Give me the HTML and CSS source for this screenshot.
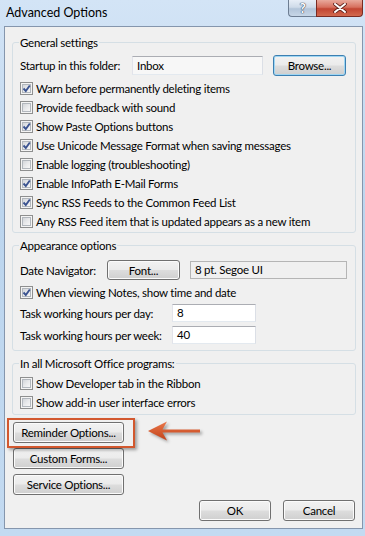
FILE: index.html
```html
<!DOCTYPE html>
<html lang="en">
<head>
  <meta charset="UTF-8" />
  <title>Advanced Options</title>
  <link rel="stylesheet" href="styles.css">
</head>
<body>
  <div class="window">
    <div class="titlebar">
      <span class="title">Advanced Options</span>
      <div class="caption-buttons">
        <span class="cap help">?</span>
        <span class="cap close">
          <svg width="14" height="10" viewBox="0 0 14 10"><path d="M2 1 L12 9 M12 1 L2 9" stroke="#5b1f18" stroke-width="3.6" stroke-linecap="round"/><path d="M2 1 L12 9 M12 1 L2 9" stroke="#fff" stroke-width="2" stroke-linecap="round"/></svg>
        </span>
      </div>
    </div>

    <div class="client">
      <fieldset class="group general">
        <legend>General settings</legend>
        <div class="row folder">
          <span class="label folder-label">Startup in this folder:</span>
          <span class="field inbox">Inbox</span>
          <button class="btn default browse">Browse...</button>
        </div>
        <div class="check first"><span class="box"><svg viewBox="0 0 9 9"><path d="M1.5 4.5 L3.8 7 L7.8 1.5" /></svg></span>Warn before permanently deleting items</div>
        <div class="check"><span class="box"></span>Provide feedback with sound</div>
        <div class="check"><span class="box"><svg viewBox="0 0 9 9"><path d="M1.5 4.5 L3.8 7 L7.8 1.5" /></svg></span>Show Paste Options buttons</div>
        <div class="check"><span class="box"><svg viewBox="0 0 9 9"><path d="M1.5 4.5 L3.8 7 L7.8 1.5" /></svg></span>Use Unicode Message Format when saving messages</div>
        <div class="check"><span class="box"></span>Enable logging (troubleshooting)</div>
        <div class="check"><span class="box"><svg viewBox="0 0 9 9"><path d="M1.5 4.5 L3.8 7 L7.8 1.5" /></svg></span>Enable InfoPath E-Mail Forms</div>
        <div class="check"><span class="box"><svg viewBox="0 0 9 9"><path d="M1.5 4.5 L3.8 7 L7.8 1.5" /></svg></span>Sync RSS Feeds to the Common Feed List</div>
        <div class="check"><span class="box"></span>Any RSS Feed item that is updated appears as a new item</div>
      </fieldset>

      <fieldset class="group appearance">
        <legend>Appearance options</legend>
        <div class="row navigator">
          <span class="label nav-label">Date Navigator:</span>
          <button class="btn font-btn">Font...</button>
          <span class="field readonly">8 pt. Segoe UI</span>
        </div>
        <div class="check notes"><span class="box"><svg viewBox="0 0 9 9"><path d="M1.5 4.5 L3.8 7 L7.8 1.5" /></svg></span>When viewing Notes, show time and date</div>
        <div class="row hours day">
          <span class="label hours-label">Task working hours per day:</span>
          <span class="field hours-field">8</span>
        </div>
        <div class="row hours week">
          <span class="label hours-label">Task working hours per week:</span>
          <span class="field hours-field">40</span>
        </div>
      </fieldset>

      <fieldset class="group office">
        <legend>In all Microsoft Office programs:</legend>
        <div class="check"><span class="box"></span>Show Developer tab in the Ribbon</div>
        <div class="check"><span class="box"></span>Show add-in user interface errors</div>
      </fieldset>

      <div class="side-buttons">
        <div class="marked">
          <button class="btn wide">Reminder Options...</button>
          <span class="highlight"></span>
          <svg class="arrow" width="58" height="26" viewBox="0 0 58 26">
            <defs>
              <linearGradient id="arrowFill" x1="0" y1="0" x2="0" y2="1">
                <stop offset="0" stop-color="#e9774a"/>
                <stop offset="1" stop-color="#c24219"/>
              </linearGradient>
            </defs>
            <path d="M2 12 L21 2.5 L16.5 10.5 L54 10.5 L54 13.5 L16.5 13.5 L21 21.5 Z" fill="url(#arrowFill)"/>
          </svg>
        </div>
        <button class="btn wide">Custom Forms...</button>
        <button class="btn wide">Service Options...</button>
      </div>

      <div class="dialog-buttons">
        <button class="btn action">OK</button>
        <button class="btn action">Cancel</button>
      </div>
    </div>
  </div>
</body>
</html>
```

FILE: styles.css
```css
body {
  margin: 0;
  font-family: 'Lato', 'Liberation Sans', sans-serif;
  font-size: 11.5px;
  letter-spacing: -0.25px;
  color: #000;
  background-color: #ffffff;
  white-space: nowrap;
}

.window {
  width: 365px;
  height: 536px;
  box-sizing: border-box;
  padding: 0 2px 0 4px;
  background: linear-gradient(180deg, #d3e4f6 0%, #bcd5ee 40%, #c3daf1 100%);
}

.titlebar {
  height: 26px;
  display: flex;
  justify-content: space-between;
  align-items: flex-start;
}

.title {
  margin: 5px 0 0 2px;
  line-height: 15px;
  font-size: 12.5px;
  letter-spacing: 0;
  color: #000;
}

.caption-buttons {
  display: flex;
}

.cap {
  height: 17px;
  box-sizing: border-box;
  display: flex;
  align-items: center;
  justify-content: center;
  border: 1px solid #6d7d92;
  border-top: none;
}

.help {
  width: 28px;
  border-radius: 0 0 0 4px;
  border-right: none;
  background: linear-gradient(180deg, #e7eef7 0%, #cfdbe9 45%, #b2c4d9 55%, #c7d6e7 100%);
  color: #fff;
  font-weight: bold;
  font-size: 13px;
  text-shadow: 0 0 1px #3d4c60, 0 0 1px #3d4c60, 0 0 1px #3d4c60;
}

.close {
  width: 47px;
  border-radius: 0 0 4px 0;
  border-color: #7a2b22;
  background: linear-gradient(180deg, #e9a99c 0%, #d7705e 45%, #c24532 55%, #d26a4f 100%);
}

.client {
  height: 503px;
  box-sizing: border-box;
  background-color: #f0f0f0;
  border: 1px solid #8596ad;
  padding: 8px 6px 0 7px;
}

.group {
  margin: 0;
  border: 1px solid #d5dfe5;
  border-radius: 3px;
  padding: 0 6px 0 7px;
}

.group legend {
  padding: 0 1px;
  margin-left: -1px;
  line-height: 15px;
}

.group + .group {
  margin-top: 5px;
}

.general {
  padding-top: 5px;
  padding-bottom: 1px;
}

.appearance {
  padding-top: 7px;
  padding-bottom: 5px;
}

.office {
  padding-top: 3px;
  padding-bottom: 2px;
}

.row {
  display: flex;
  align-items: center;
}

.label {
  flex-shrink: 0;
}

.folder {
  height: 21px;
}

.folder-label {
  width: 112px;
}

.field {
  box-sizing: border-box;
  height: 19px;
  line-height: 17px;
  padding: 0 4px;
  border: 1px solid #abadb3;
  border-color: #abadb3 #dbdfe6 #e3e9ef #e2e3ea;
  background-color: #ffffff;
}

.inbox {
  width: 131px;
  background-color: #f7f7f7;
  margin-right: 10px;
}

.check {
  display: flex;
  align-items: center;
  height: 19px;
}

.check.first {
  margin-top: 3px;
}

.box {
  position: relative;
  width: 13px;
  height: 13px;
  box-sizing: border-box;
  margin-right: 3px;
  border: 1px solid #8e8f8f;
  padding: 1px;
  background-color: #f4f4f4;
  display: flex;
  flex-shrink: 0;
}

.box::before {
  content: '';
  flex: 1;
  border: 1px solid #b2b7bd;
  background: linear-gradient(135deg, #d3d6da 0%, #e8e9eb 50%, #f7f7f7 100%);
}

.box svg {
  position: absolute;
  left: 1px;
  top: 1px;
  width: 9px;
  height: 9px;
}

.box svg path {
  fill: none;
  stroke: #3b5390;
  stroke-width: 1.9;
}

.btn {
  font-family: inherit;
  font-size: 11.5px;
  letter-spacing: -0.25px;
  color: #000;
  height: 21px;
  padding: 0;
  box-sizing: border-box;
  border: 1px solid #707070;
  border-radius: 3px;
  background: linear-gradient(180deg, #f2f2f2 0%, #ebebeb 48%, #dddddd 52%, #cfcfcf 100%);
  box-shadow: inset 0 0 0 1px #fbfbfb;
  white-space: nowrap;
}

.default {
  border-color: #3c7fb1;
  box-shadow: inset 0 0 0 1px #9fd6f3;
}

.browse {
  width: 73px;
}

.navigator {
  height: 20px;
}

.nav-label {
  width: 87px;
}

.font-btn {
  width: 73px;
  height: 20px;
  margin-right: 10px;
}

.readonly {
  width: 157px;
  height: 18px;
  line-height: 16px;
  background-color: #f0f0f0;
  border: 1px solid #b5b5b5;
}

.notes {
  margin-top: 3px;
}

.hours {
  height: 20px;
}

.hours.day {
  margin-top: 1px;
}

.hours.week {
  margin-top: 2px;
}

.hours-label {
  width: 152px;
}

.hours-field {
  width: 84px;
  height: 18px;
  line-height: 16px;
}

.side-buttons {
  display: flex;
  flex-direction: column;
  align-items: flex-start;
  gap: 5px;
  margin: 7px 0 0 1px;
}

.marked {
  position: relative;
}

.wide {
  width: 111px;
  display: block;
}

.highlight {
  position: absolute;
  left: -6px;
  top: -4px;
  width: 128px;
  height: 30px;
  box-sizing: border-box;
  border: 2px solid #d2582f;
  box-shadow: 2px 2px 3px rgba(0, 0, 0, 0.35);
}

.arrow {
  position: absolute;
  left: 133px;
  top: -3px;
  filter: drop-shadow(2px 2px 1.5px rgba(0, 0, 0, 0.35));
}

.dialog-buttons {
  display: flex;
  justify-content: flex-end;
  gap: 12px;
  margin-top: 5px;
  margin-right: 1px;
}

.action {
  width: 72px;
}
```
